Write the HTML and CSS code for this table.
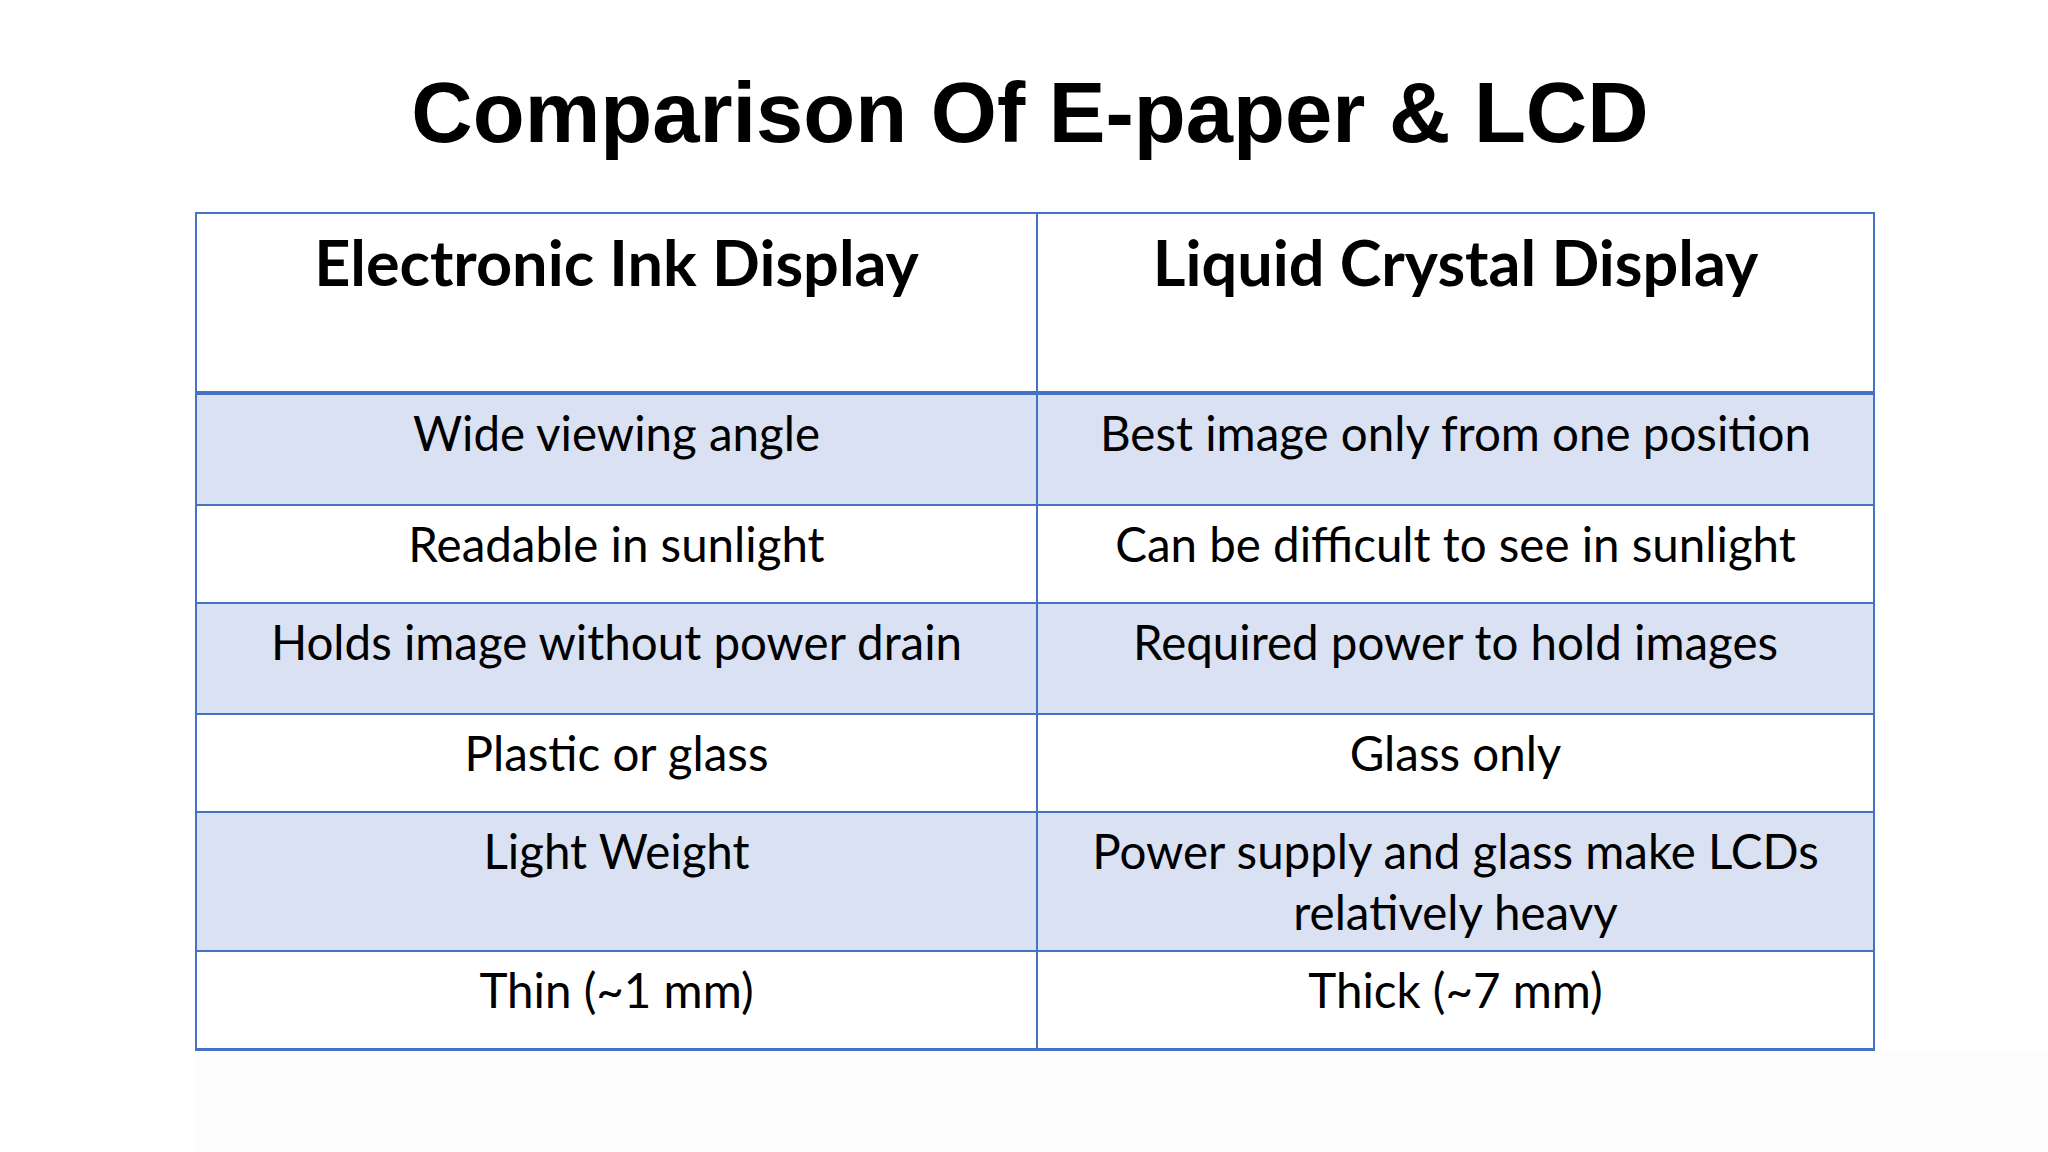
FILE: index.html
```html
<!DOCTYPE html>
<html lang="en">
<head>
<meta charset="utf-8">
<title>Comparison Of E-paper &amp; LCD</title>
<link rel="stylesheet" href="styles.css">
</head>
<body>
<main class="slide">
  <h1 class="title">Comparison Of E-paper &amp; LCD</h1>
  <table class="compare">
    <colgroup>
      <col class="col-left">
      <col class="col-right">
    </colgroup>
    <thead>
      <tr class="row-head">
        <th>Electronic Ink Display</th>
        <th>Liquid Crystal Display</th>
      </tr>
    </thead>
    <tbody>
      <tr class="band row-112">
        <td>Wide viewing angle</td>
        <td>Best image only from one position</td>
      </tr>
      <tr class="row-98">
        <td>Readable in sunlight</td>
        <td>Can be difficult to see in sunlight</td>
      </tr>
      <tr class="band row-111">
        <td>Holds image without power drain</td>
        <td>Required power to hold images</td>
      </tr>
      <tr class="row-98">
        <td>Plastic or glass</td>
        <td>Glass only</td>
      </tr>
      <tr class="band row-139">
        <td>Light Weight</td>
        <td>Power supply and glass make LCDs<br>relatively heavy</td>
      </tr>
      <tr class="row-98 last">
        <td>Thin (~1 mm)</td>
        <td>Thick (~7 mm)</td>
      </tr>
    </tbody>
  </table>
  <div class="shade"></div>
</main>
</body>
</html>
```

FILE: styles.css
```css
html, body {
  margin: 0;
  padding: 0;
  background: #ffffff;
}

.slide {
  width: 2048px;
  height: 1152px;
  padding-top: 70px;
  box-sizing: border-box;
  overflow: hidden;
}

.title {
  margin: 0;
  padding-left: 12px;
  text-align: center;
  font-family: "Liberation Sans", Arial, sans-serif;
  font-weight: 700;
  font-size: 85px;
  line-height: 1;
  color: #000000;
}

.compare {
  margin: 57px 0 0 195px;
  width: 1678px;
  border-collapse: collapse;
  table-layout: fixed;
  font-family: Lato, "Open Sans", sans-serif;
  color: #000000;
}

.col-left { width: 841px; }
.col-right { width: 837px; }

.compare th,
.compare td {
  border: 2px solid #4472c4;
  text-align: center;
  vertical-align: top;
  padding: 0 10px;
}

.compare th {
  font-weight: 700;
  font-size: 63px;
  line-height: 74px;
  padding-top: 11px;
  height: 180px;
  box-sizing: border-box;
  border-bottom-width: 4px;
}

.compare td {
  font-weight: 400;
  font-size: 47.5px;
  line-height: 61px;
  padding-top: 7px;
  box-sizing: border-box;
}

.band td { background: #d9e1f2; }

.row-112 td { height: 112px; }
.row-111 td { height: 111px; }
.row-98 td { height: 98px; }
.row-139 td { height: 139px; }
.last td { border-bottom-width: 3px; }

.shade {
  margin-left: 195px;
  width: 1853px;
  height: 110px;
  background: #fdfdfd;
}
```
